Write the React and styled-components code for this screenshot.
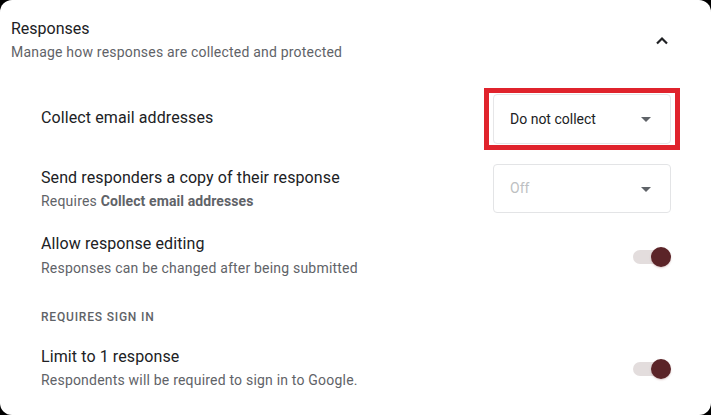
import React from "react";
import styled, { createGlobalStyle } from "styled-components";

const Global = createGlobalStyle`
  html, body { margin: 0; padding: 0; background: #000; }
  body { font-family: Roboto, "Noto Sans", Arial, sans-serif; -webkit-font-smoothing: antialiased; }
  #root { width: 711px; height: 415px; }
`;

const Card = styled.section`
  width: 711px;
  height: 415px;
  box-sizing: border-box;
  background: #fff;
  border-radius: 12px;
  overflow: hidden;
  display: flex;
  flex-direction: column;
`;

const Header = styled.header`
  display: flex;
  align-items: center;
  justify-content: space-between;
  padding: 17px 37px 0 11px;
`;

const HeaderText = styled.div`
  display: flex;
  flex-direction: column;
`;

const Title = styled.h2`
  margin: 0;
  font-size: 16px;
  line-height: 24px;
  font-weight: 400;
  color: #202124;
`;

const Subtitle = styled.p`
  margin: ${(p) => (p.$gap ? `${p.$gap}px` : "1px")} 0 0;
  font-size: 14px;
  line-height: 20px;
  font-weight: 400;
  color: #5f6368;
  letter-spacing: 0.2px;
  b { font-weight: 700; letter-spacing: 0.1px; }
`;

const IconButton = styled.button`
  width: 24px;
  height: 24px;
  border: 0;
  padding: 0;
  background: transparent;
  display: flex;
  align-items: center;
  justify-content: center;
  margin-top: 3px;
  cursor: pointer;
`;

const List = styled.div`
  display: flex;
  flex-direction: column;
  padding: 32px 40px 0 41px;
`;

const Row = styled.div`
  display: flex;
  align-items: center;
  justify-content: space-between;
  margin-top: ${(p) => p.$top || 0}px;
`;

const RowText = styled.div`
  display: flex;
  flex-direction: column;
  margin-bottom: ${(p) => p.$lift || 0}px;
`;

const RowTitle = styled.div`
  font-size: 16px;
  line-height: 24px;
  color: #202124;
  letter-spacing: 0.1px;
`;

const SectionLabel = styled.div`
  margin-top: 31px;
  font-size: 12px;
  line-height: 16px;
  font-weight: 500;
  letter-spacing: 0.8px;
  color: #5f6368;
  text-transform: uppercase;
`;

const SelectWrap = styled.div`
  position: relative;
  ${(p) =>
    p.$highlight &&
    `
    &::after {
      content: "";
      position: absolute;
      top: -6px;
      bottom: -6px;
      left: -9px;
      right: -9px;
      border: 5px solid #e0232c;
      pointer-events: none;
    }
  `}
`;

const Select = styled.div`
  width: 178px;
  height: ${(p) => p.$h || 50}px;
  box-sizing: border-box;
  border: 1px solid ${(p) => (p.$disabled ? "#e3e4e6" : "#e6e6e8")};
  border-radius: 4px;
  display: flex;
  align-items: center;
  justify-content: space-between;
  padding: 0 19px 1px 16px;
  font-size: 14px;
  color: ${(p) => (p.$disabled ? "#bdbfc2" : "#202124")};
  background: #fff;
`;

const Caret = styled.span`
  width: 0;
  height: 0;
  border-left: 5px solid transparent;
  border-right: 5px solid transparent;
  border-top: 5px solid #5f6368;
  margin-top: 2px;
`;

const Switch = styled.div`
  position: relative;
  width: 38px;
  height: 20px;
  flex: none;
  margin-top: ${(p) => p.$down || 0}px;
`;

const Track = styled.span`
  position: absolute;
  left: 0;
  top: 3px;
  width: 34px;
  height: 14px;
  border-radius: 7px;
  background: #e3dddd;
`;

const Thumb = styled.span`
  position: absolute;
  right: 0;
  top: 0;
  width: 20px;
  height: 20px;
  border-radius: 50%;
  background: #5b2428;
  box-shadow: 0 1px 2px rgba(120, 40, 40, 0.25);
`;

function Toggle({ down }) {
  return (
    <Switch $down={down}>
      <Track />
      <Thumb />
    </Switch>
  );
}

export default function App() {
  return (
    <>
      <Global />
      <Card>
        <Header>
          <HeaderText>
            <Title>Responses</Title>
            <Subtitle>Manage how responses are collected and protected</Subtitle>
          </HeaderText>
          <IconButton aria-label="Collapse">
            <svg width="14" height="10" viewBox="0 0 14 10">
              <polyline points="2,7.5 7,2.5 12,7.5" fill="none" stroke="#202124" strokeWidth="2.2" />
            </svg>
          </IconButton>
        </Header>
        <List>
          <Row>
            <RowText $lift={3}>
              <RowTitle>Collect email addresses</RowTitle>
            </RowText>
            <SelectWrap $highlight>
              <Select>
                Do not collect
                <Caret />
              </Select>
            </SelectWrap>
          </Row>
          <Row $top={20}>
            <RowText>
              <RowTitle>Send responders a copy of their response</RowTitle>
              <Subtitle>
                Requires <b>Collect email addresses</b>
              </Subtitle>
            </RowText>
            <SelectWrap>
              <Select $disabled $h={49}>
                Off
                <Caret />
              </Select>
            </SelectWrap>
          </Row>
          <Row $top={19}>
            <RowText>
              <RowTitle>Allow response editing</RowTitle>
              <Subtitle $gap={2}>Responses can be changed after being submitted</Subtitle>
            </RowText>
            <Toggle down={3} />
          </Row>
          <SectionLabel>Requires sign in</SectionLabel>
          <Row $top={20}>
            <RowText>
              <RowTitle>Limit to 1 response</RowTitle>
              <Subtitle>Respondents will be required to sign in to Google.</Subtitle>
            </RowText>
            <Toggle down={3} />
          </Row>
        </List>
      </Card>
    </>
  );
}
